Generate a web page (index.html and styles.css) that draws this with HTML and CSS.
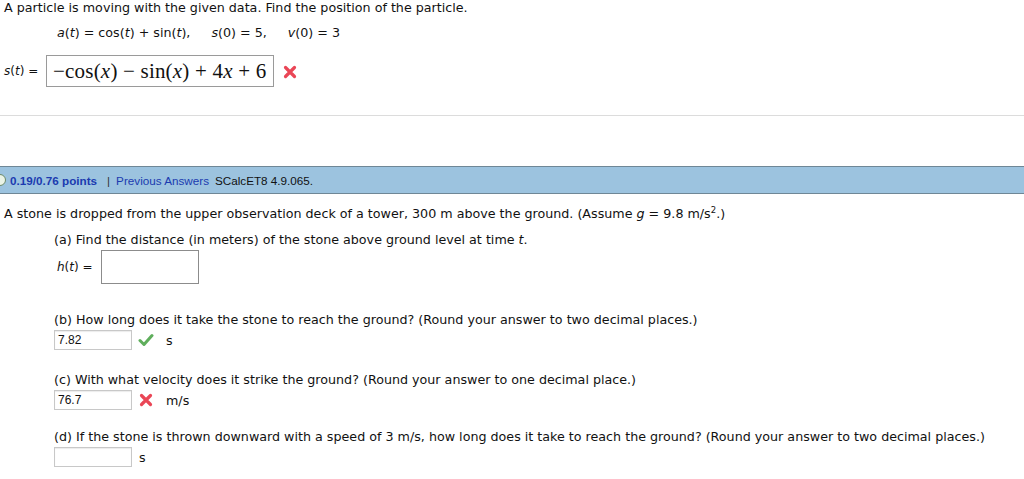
FILE: index.html
```html
<!DOCTYPE html>
<html>
<head>
<meta charset="utf-8">
<link rel="stylesheet" href="styles.css">
</head>
<body>
<div class="q1">
  <p class="intro">A particle is moving with the given data. Find the position of the particle.</p>
  <p class="given"><i>a</i>(<i>t</i>) = cos(<i>t</i>) + sin(<i>t</i>),<span class="sp"></span><i>s</i>(0) = 5,<span class="sp"></span><i>v</i>(0) = 3</p>
  <div class="ansrow">
    <span class="lbl"><i>s</i>(<i>t</i>) =</span>
    <div class="mathbox">−cos(<i>x</i>) − sin(<i>x</i>) + 4<i>x</i> + 6</div>
    <svg class="xmark big" viewBox="0 0 14 14"><path d="M2.5 2.5 L11.5 11.5 M11.5 2.5 L2.5 11.5" stroke="#ea4656" stroke-width="3.2" stroke-linecap="round"/></svg>
  </div>
</div>
<div class="rule"></div>
<div class="bar">
  <span class="dot"></span>
  <span class="pts">0.19/0.76 points</span>
  <span class="pipe">|</span>
  <span class="prev">Previous Answers</span>
  <span class="src">SCalcET8 4.9.065.</span>
</div>
<div class="q2">
  <p class="stem">A stone is dropped from the upper observation deck of a tower, 300 m above the ground. (Assume <i>g</i> = 9.8 m/s<sup>2</sup>.)</p>
  <div class="part">
    <p class="ptext">(a) Find the distance (in meters) of the stone above ground level at time <i>t</i>.</p>
    <div class="hrow"><span class="lbl"><i>h</i>(<i>t</i>) =</span><div class="hbox"></div></div>
  </div>
  <div class="part">
    <p class="ptext">(b) How long does it take the stone to reach the ground? (Round your answer to two decimal places.)</p>
    <div class="irow"><div class="inp">7.82</div>
      <svg class="mark" viewBox="0 0 16 14"><path d="M2 7.5 L6 11.5 L14 2.5" fill="none" stroke="#5fae5c" stroke-width="3" stroke-linecap="round" stroke-linejoin="round"/></svg>
      <span class="unit">s</span></div>
  </div>
  <div class="part">
    <p class="ptext">(c) With what velocity does it strike the ground? (Round your answer to one decimal place.)</p>
    <div class="irow"><div class="inp">76.7</div>
      <svg class="mark" viewBox="0 0 16 14"><path d="M3.5 2.5 L12.5 11.5 M12.5 2.5 L3.5 11.5" stroke="#ea4656" stroke-width="3.2" stroke-linecap="round"/></svg>
      <span class="unit">m/s</span></div>
  </div>
  <div class="part">
    <p class="ptext">(d) If the stone is thrown downward with a speed of 3 m/s, how long does it take to reach the ground? (Round your answer to two decimal places.)</p>
    <div class="irow"><div class="inp empty"></div>
      <span class="unit plain">s</span></div>
  </div>
</div>
</body>
</html>
```
FILE: styles.css
```css
html, body { margin: 0; padding: 0; background: #fff; }
body {
  font-family: "DejaVu Sans", Verdana, sans-serif;
  font-size: 12.7px;
  color: #111;
  width: 1024px;
  height: 479px;
  overflow: hidden;
}
p { margin: 0; }
i { font-style: italic; }
.q1 { padding: 0 0 0 4px; }
.intro { padding-top: 1px; line-height: 14px; }
.given { padding-left: 53px; margin-top: 11px; line-height: 14px; }
.sp { display: inline-block; width: 21px; }
.ansrow { display: flex; align-items: center; margin-top: 15px; height: 32px; }
.lbl { font-size: 12px; }
.ansrow .lbl { width: 42px; }
.mathbox {
  border: 1px solid #9a9a9a;
  height: 30px;
  width: 214px;
  padding: 0 6px;
  box-sizing: content-box;
  font-family: "Liberation Serif", "Times New Roman", serif;
  font-size: 21px;
  line-height: 30px;
  letter-spacing: 0.2px;
  color: #111;
  white-space: nowrap;
}
.xmark.big { width: 14px; height: 14px; margin-left: 9px; margin-top: 2px; }
.rule { height: 1px; background: #dcdcdc; margin-top: 28px; }
.bar {
  margin-top: 50px;
  height: 26px;
  background: #9cc3df;
  border-top: 1px solid #6f8796;
  border-bottom: 1px solid #6f8796;
  display: flex;
  align-items: center;
  font-family: "Liberation Sans", Arial, sans-serif;
  font-size: 11.7px;
  position: relative;
}
.dot {
  position: absolute; left: -6px; top: 7px;
  width: 10px; height: 10px; border-radius: 50%;
  background: #eaf3e6; border: 1px solid #6b8a6a;
}
.pts { color: #1b3bb0; font-weight: bold; margin-left: 10px; }
.pipe { color: #333; margin-left: 10px; }
.prev { color: #1b3bb0; margin-left: 6px; }
.src { color: #111; margin-left: 6px; }
.q2 { padding-left: 4px; }
.stem { margin-top: 12px; line-height: 15px; }
sup { font-size: 8.5px; vertical-align: 5px; line-height: 0; }
.part { padding-left: 50px; }
.part .ptext { line-height: 14px; }
.part:nth-child(2) { margin-top: 12px; }
.hrow { display: flex; align-items: center; margin-top: 3px; padding-left: 3px; }
.hrow .lbl { width: 44px; }
.hbox { width: 96px; height: 32px; border: 1px solid #8c8c8c; }
.part:nth-child(3) { margin-top: 29px; }
.part:nth-child(4) { margin-top: 23px; }
.part:nth-child(5) { margin-top: 20px; }
.irow { display: flex; align-items: center; margin-top: 3px; height: 20px; }
.inp {
  width: 73px; height: 18px; border: 1px solid #c8c8c8;
  font-family: "Liberation Sans", Arial, sans-serif; font-size: 12px;
  line-height: 18px; padding-left: 3px; color: #111;
  box-shadow: inset 0 1px 1px rgba(0,0,0,0.08);
}
.mark { width: 16px; height: 14px; margin-left: 6px; display: inline-block; }
.unit { margin-left: 12px; }
.unit.plain { margin-left: 7px; }
```
